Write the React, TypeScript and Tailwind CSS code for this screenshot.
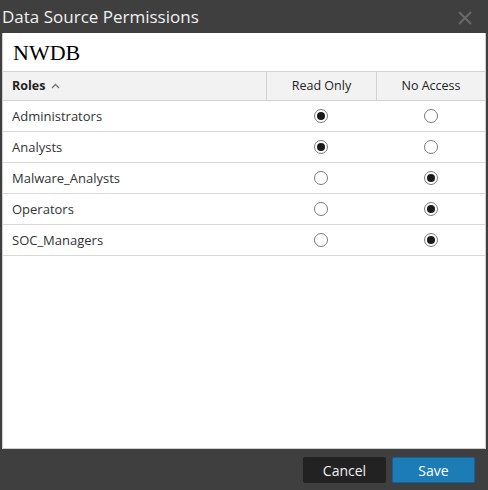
type Access = 'read' | 'none'

const roles: { name: string; access: Access }[] = [
  { name: 'Administrators', access: 'read' },
  { name: 'Analysts', access: 'read' },
  { name: 'Malware_Analysts', access: 'none' },
  { name: 'Operators', access: 'none' },
  { name: 'SOC_Managers', access: 'none' },
]

function Radio({ checked }: { checked: boolean }) {
  return (
    <span className="inline-flex items-center justify-center w-[14px] h-[14px] rounded-full border border-[#7a7a7a] bg-white">
      {checked && <span className="w-[8px] h-[8px] rounded-full bg-[#1a1a1a]" />}
    </span>
  )
}

export default function App() {
  return (
    <div
      className="w-[488px] h-[490px] bg-[#3f3f3f] flex flex-col"
      style={{ fontFamily: '"Open Sans", "Liberation Sans", sans-serif' }}
    >
      <div className="h-[33px] flex items-center justify-between pl-[2px] pr-[16px]">
        <span className="text-[17px] text-[#f0f0f0] leading-none -mt-[1px]">Data Source Permissions</span>
        <svg width="14" height="14" viewBox="0 0 14 14" className="mt-[3px]">
          <path d="M1 1 L13 13 M13 1 L1 13" stroke="#6a6a6a" strokeWidth="2" />
        </svg>
      </div>

      <div className="ml-[2px] w-[484px] h-[416px] bg-white border border-[#cfcfcf] border-t-0 flex flex-col">
        <div className="h-[38px] flex items-center px-[10px]">
          <span
            className="text-[22px] text-black leading-none mt-[1px]"
            style={{ fontFamily: '"Liberation Serif", "Times New Roman", serif' }}
          >
            NWDB
          </span>
        </div>

        <div className="grid grid-cols-[263px_110px_1fr] h-[30px] bg-[#f2f2f2] border-y border-[#d2d2d2] text-[12.5px] text-[#222]">
          <div className="flex items-center pl-[9px] gap-[6px] font-bold">
            Roles
            <svg width="9" height="6" viewBox="0 0 9 6">
              <path d="M1 5 L4.5 1.5 L8 5" fill="none" stroke="#777" strokeWidth="1.4" />
            </svg>
          </div>
          <div className="flex items-center justify-center border-l border-[#d2d2d2]">Read Only</div>
          <div className="flex items-center justify-center border-l border-[#d2d2d2]">No Access</div>
        </div>

        {roles.map(r => (
          <div
            key={r.name}
            className="grid grid-cols-[263px_110px_1fr] h-[31px] border-b border-[#d9d9d9] text-[13px] text-[#333]"
          >
            <div className="flex items-center pl-[9px] pt-[1px]">{r.name}</div>
            <div className="flex items-center justify-center">
              <Radio checked={r.access === 'read'} />
            </div>
            <div className="flex items-center justify-center">
              <Radio checked={r.access === 'none'} />
            </div>
          </div>
        ))}
      </div>

      <div className="flex justify-end gap-[6px] pr-[13px] pt-[8px]">
        <button className="w-[83px] h-[26px] bg-[#222222] rounded-[2px] text-[14px] text-[#f0f0f0]">
          Cancel
        </button>
        <button className="w-[83px] h-[26px] bg-[#1b7cb6] border border-[#15629a] rounded-[2px] text-[14px] text-white">
          Save
        </button>
      </div>
    </div>
  )
}
